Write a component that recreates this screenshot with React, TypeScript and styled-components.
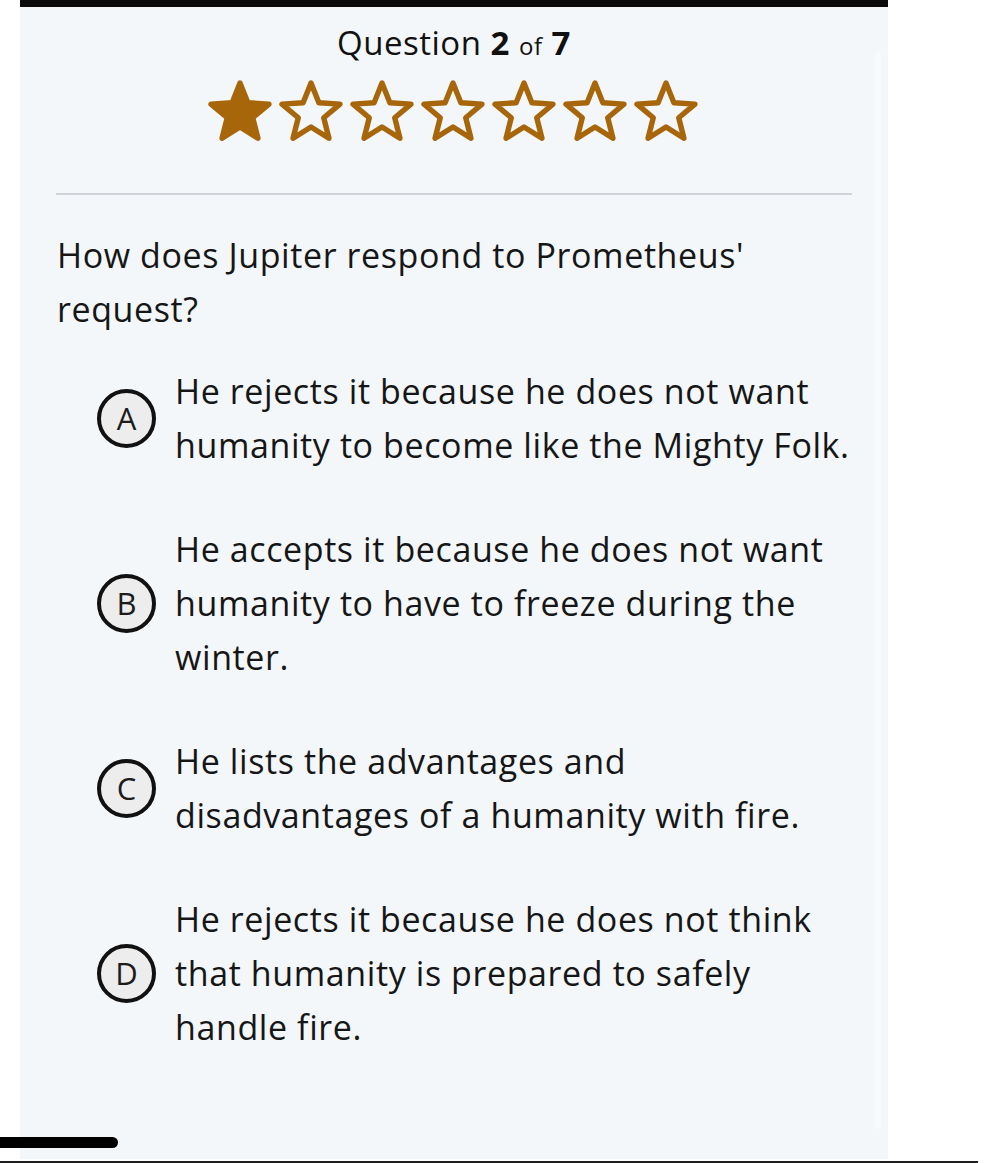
import React from "react";
import styled, { createGlobalStyle } from "styled-components";

const GlobalStyle = createGlobalStyle`
  html, body {
    margin: 0;
    padding: 0;
    background: #ffffff;
  }
  body {
    font-family: "Open Sans", "Liberation Sans", sans-serif;
    color: #161616;
  }
`;

const Screen = styled.div`
  position: relative;
  width: 984px;
  height: 1163px;
  overflow: hidden;
`;

const Panel = styled.div`
  position: relative;
  margin-left: 20px;
  width: 868px;
  height: 1159px;
  box-sizing: border-box;
  border-top: 7px solid #0a0a0a;
  background: #f3f7fa;
  display: flex;
  flex-direction: column;
`;

const ScrollTrack = styled.div`
  position: absolute;
  right: 7px;
  top: 45px;
  width: 6px;
  height: 1077px;
  border-radius: 3px;
  background: #f8fafc;
`;

const Heading = styled.div`
  margin-top: 16px;
  text-align: center;
  font-size: 33px;
  line-height: 40px;
  color: #111;
  letter-spacing: 0.5px;
`;

const Num = styled.span`
  font-weight: 700;
`;

const Small = styled.span`
  font-size: 24px;
`;

const StarRow = styled.div`
  margin-top: 14px;
  display: flex;
  justify-content: center;
  gap: 7px;
  padding-right: 2px;
`;

const Divider = styled.div`
  margin: 50px 36px 0;
  height: 2px;
  background: #d0d4d8;
`;

const Question = styled.div`
  margin-top: 33px;
  padding-left: 37px;
  font-size: 34px;
  line-height: 54px;
  letter-spacing: 0.6px;
`;

const Line = styled.span`
  display: block;
  white-space: nowrap;
`;

const ChoiceList = styled.div`
  margin-top: 28px;
  display: flex;
  flex-direction: column;
  gap: 50px;
`;

const Choice = styled.div`
  display: flex;
  align-items: center;
  gap: 19px;
  padding-left: 77px;
`;

const Badge = styled.div`
  flex: none;
  width: 59px;
  height: 59px;
  box-sizing: border-box;
  border: 4px solid #111;
  border-radius: 50%;
  background: #ededed;
  display: flex;
  align-items: center;
  justify-content: center;
  font-size: 31px;
  color: #1c1c1c;
`;

const ChoiceText = styled.div`
  font-size: 34px;
  line-height: 54px;
  letter-spacing: 0.6px;
`;

const HomeBar = styled.div`
  position: absolute;
  left: 0;
  top: 1137px;
  width: 118px;
  height: 11px;
  border-radius: 0 6px 6px 0;
  background: #000;
`;

const BottomRule = styled.div`
  margin-top: 2px;
  width: 978px;
  height: 2px;
  background: #1e1e1e;
`;

const STAR_COLOR = "#a8660a";

function starPoints(cx: number, cy: number, R: number, r: number) {
  const pts: string[] = [];
  for (let i = 0; i < 10; i++) {
    const rad = i % 2 === 0 ? R : r;
    const a = ((-90 + i * 36) * Math.PI) / 180;
    pts.push(`${(cx + rad * Math.cos(a)).toFixed(2)},${(cy + rad * Math.sin(a)).toFixed(2)}`);
  }
  return pts.join(" ");
}

function Star({ filled }: { filled: boolean }) {
  return (
    <svg width="64" height="63" viewBox="0 0 64 63">
      <polygon
        points={starPoints(32, 33.6, 30.5, 13.4)}
        fill={filled ? STAR_COLOR : "none"}
        stroke={STAR_COLOR}
        strokeWidth="5.4"
        strokeLinejoin="round"
      />
    </svg>
  );
}

const choices = [
  { key: "A", lines: ["He rejects it because he does not want", "humanity to become like the Mighty Folk."] },
  { key: "B", lines: ["He accepts it because he does not want", "humanity to have to freeze during the", "winter."] },
  { key: "C", lines: ["He lists the advantages and", "disadvantages of a humanity with fire."] },
  { key: "D", lines: ["He rejects it because he does not think", "that humanity is prepared to safely", "handle fire."] },
];

export default function App() {
  return (
    <Screen>
      <GlobalStyle />
      <Panel>
        <ScrollTrack />
        <Heading>
          Question <Num>2</Num> <Small>of</Small> <Num>7</Num>
        </Heading>
        <StarRow>
          {Array.from({ length: 7 }).map((_, i) => (
            <Star key={i} filled={i === 0} />
          ))}
        </StarRow>
        <Divider />
        <Question>
          <Line>How does Jupiter respond to Prometheus'</Line>
          <Line>request?</Line>
        </Question>
        <ChoiceList>
          {choices.map((c) => (
            <Choice key={c.key}>
              <Badge>{c.key}</Badge>
              <ChoiceText>
                {c.lines.map((l, i) => (
                  <Line key={i}>{l}</Line>
                ))}
              </ChoiceText>
            </Choice>
          ))}
        </ChoiceList>
      </Panel>
      <BottomRule />
      <HomeBar />
    </Screen>
  );
}
